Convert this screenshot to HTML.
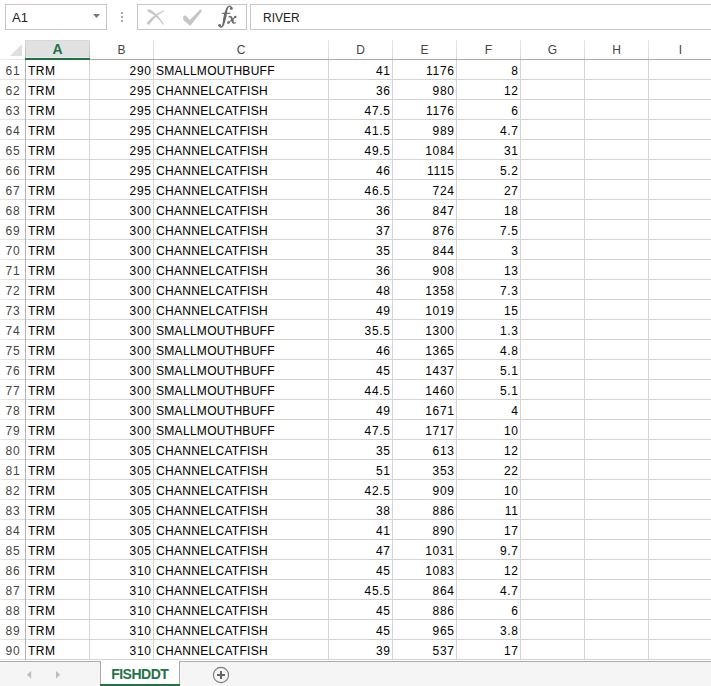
<!DOCTYPE html>
<html><head><meta charset="utf-8"><style>
*{margin:0;padding:0;box-sizing:border-box}
html,body{width:711px;height:686px;overflow:hidden;background:#fff}
body{position:relative;font-family:"Liberation Sans",sans-serif;}
.a{position:absolute}
.t{position:absolute;font-size:12px;line-height:14px;white-space:nowrap;color:#000}
.r{text-align:right}
.t{-webkit-text-stroke:0.05px}
.t.n{letter-spacing:0.7px;-webkit-text-stroke:0px}
.rh{position:absolute;font-size:12px;line-height:14px;white-space:nowrap;color:#444;text-align:right;left:0;width:20.6px;letter-spacing:0.9px}
.hl{position:absolute;height:1px;background:#d4d4d4}
.vl{position:absolute;width:1px;background:#d4d4d4}
.ch{position:absolute;font-size:12px;line-height:14px;color:#444;text-align:center;top:43px}
</style></head><body>
<div class="a" style="left:5px;top:4px;width:102px;height:26px;border:1px solid #c6c6c6"></div>
<div class="t" style="left:12px;top:11px;font-size:13px;color:#222;-webkit-text-stroke:0">A1</div>
<svg class="a" style="left:93px;top:14px" width="8" height="5"><path d="M0 0H7L3.5 4Z" fill="#777"/></svg>
<div class="a" style="left:121px;top:12px;width:2px;height:2px;background:#a6a6a6"></div>
<div class="a" style="left:121px;top:16px;width:2px;height:2px;background:#a6a6a6"></div>
<div class="a" style="left:121px;top:20px;width:2px;height:2px;background:#a6a6a6"></div>
<div class="a" style="left:137px;top:4px;width:110px;height:26px;border:1px solid #c6c6c6"></div>
<svg class="a" style="left:140px;top:4px" width="30" height="26" viewBox="140 4 30 26"><g fill="#c6c6c6"><path d="M148.26 11.90 L148.89 12.17 L149.50 12.45 L150.12 12.75 L150.73 13.07 L151.35 13.42 L151.96 13.79 L152.58 14.19 L153.19 14.61 L153.81 15.05 L154.43 15.51 L155.04 16.00 L155.66 16.51 L156.27 17.05 L156.89 17.61 L157.50 18.19 L158.12 18.79 L158.73 19.42 L159.34 20.08 L159.95 20.75 L160.56 21.45 L161.17 22.17 L161.78 22.92 L162.38 23.69 L162.99 24.49 L163.81 23.91 L163.26 23.06 L162.71 22.23 L162.16 21.43 L161.60 20.64 L161.04 19.87 L160.47 19.12 L159.90 18.40 L159.33 17.70 L158.75 17.01 L158.17 16.35 L157.58 15.71 L156.99 15.09 L156.40 14.49 L155.80 13.91 L155.19 13.35 L154.58 12.82 L153.97 12.30 L153.35 11.81 L152.73 11.33 L152.10 10.88 L151.46 10.45 L150.82 10.04 L150.17 9.66 L149.54 9.30Z"/><circle cx="148.90" cy="10.60" r="1.45"/><circle cx="163.40" cy="24.20" r="0.50"/><path d="M149.66 24.17 L150.12 23.49 L150.59 22.83 L151.06 22.19 L151.55 21.55 L152.05 20.93 L152.56 20.31 L153.09 19.71 L153.62 19.12 L154.17 18.55 L154.73 17.98 L155.30 17.43 L155.88 16.88 L156.47 16.35 L157.08 15.84 L157.69 15.33 L158.32 14.83 L158.96 14.35 L159.62 13.88 L160.28 13.42 L160.96 12.97 L161.65 12.54 L162.35 12.12 L163.07 11.71 L163.80 11.30 L163.40 10.50 L162.63 10.82 L161.86 11.17 L161.10 11.53 L160.35 11.90 L159.60 12.29 L158.87 12.70 L158.15 13.11 L157.43 13.54 L156.73 13.99 L156.03 14.45 L155.35 14.93 L154.67 15.42 L154.01 15.92 L153.35 16.44 L152.70 16.97 L152.07 17.52 L151.44 18.08 L150.82 18.66 L150.22 19.25 L149.62 19.86 L149.03 20.48 L148.46 21.12 L147.89 21.77 L147.34 22.43Z"/><circle cx="148.50" cy="23.30" r="1.45"/><circle cx="163.60" cy="10.90" r="0.45"/></g></svg>
<svg class="a" style="left:180px;top:4px" width="26" height="26" viewBox="180 4 26 26"><path d="M183.2 16.4 L185.4 15.2 L189.7 19.9 L200.4 9.3 L202.0 10.9 L190.5 25.6 L189.6 25.6 L183.1 19.7 Z" fill="#c6c6c6"/></svg>
<svg class="a" style="left:214px;top:4px" width="26" height="26" viewBox="214 4 26 26"><g fill="#6a6a6a"><path d="M232.11 7.60 L232.00 7.29 L231.85 6.98 L231.68 6.69 L231.48 6.44 L231.25 6.21 L231.01 6.02 L230.74 5.86 L230.46 5.74 L230.16 5.66 L229.86 5.61 L229.55 5.61 L229.24 5.64 L228.94 5.70 L228.63 5.81 L228.33 5.94 L228.04 6.11 L227.76 6.31 L227.50 6.54 L227.24 6.80 L227.00 7.09 L226.77 7.41 L226.56 7.76 L226.37 8.14 L226.20 8.52 L227.60 9.08 L227.72 8.74 L227.86 8.45 L228.00 8.18 L228.15 7.94 L228.31 7.73 L228.48 7.54 L228.65 7.38 L228.82 7.24 L228.99 7.12 L229.15 7.03 L229.32 6.96 L229.48 6.91 L229.64 6.89 L229.79 6.88 L229.94 6.89 L230.08 6.91 L230.22 6.96 L230.36 7.03 L230.49 7.11 L230.62 7.23 L230.75 7.37 L230.87 7.54 L230.98 7.74 L231.09 8.00Z"/><circle cx="231.60" cy="7.80" r="0.55"/><circle cx="226.90" cy="8.80" r="0.75"/><path d="M226.19 8.57 L225.93 9.09 L225.68 9.63 L225.44 10.19 L225.21 10.76 L224.98 11.35 L224.77 11.96 L224.56 12.58 L224.37 13.21 L224.18 13.85 L224.01 14.50 L223.85 15.15 L223.70 15.82 L223.57 16.48 L223.44 17.15 L223.33 17.83 L223.22 18.50 L223.12 19.18 L223.03 19.85 L222.95 20.52 L222.87 21.19 L222.80 21.86 L222.72 22.51 L222.65 23.16 L222.57 23.80 L224.23 24.20 L224.45 23.58 L224.67 22.95 L224.88 22.31 L225.09 21.67 L225.29 21.02 L225.48 20.36 L225.66 19.70 L225.84 19.04 L226.01 18.37 L226.16 17.71 L226.31 17.05 L226.45 16.38 L226.57 15.73 L226.69 15.07 L226.80 14.43 L226.91 13.79 L227.00 13.15 L227.10 12.53 L227.18 11.91 L227.27 11.31 L227.35 10.72 L227.44 10.14 L227.52 9.58 L227.61 9.03Z"/><circle cx="226.90" cy="8.80" r="0.70"/><circle cx="223.40" cy="24.00" r="0.80"/><path d="M222.58 23.77 L222.49 24.14 L222.40 24.46 L222.29 24.76 L222.18 25.02 L222.06 25.26 L221.94 25.48 L221.82 25.67 L221.69 25.83 L221.56 25.98 L221.44 26.09 L221.32 26.19 L221.20 26.27 L221.09 26.32 L220.99 26.36 L220.89 26.39 L220.80 26.40 L220.72 26.40 L220.63 26.39 L220.54 26.37 L220.45 26.33 L220.36 26.27 L220.27 26.19 L220.18 26.08 L220.08 25.93 L219.12 26.47 L219.23 26.69 L219.38 26.92 L219.56 27.12 L219.75 27.30 L219.97 27.45 L220.21 27.57 L220.46 27.65 L220.72 27.70 L220.99 27.71 L221.26 27.69 L221.53 27.63 L221.80 27.53 L222.06 27.41 L222.31 27.26 L222.55 27.07 L222.78 26.86 L223.01 26.62 L223.22 26.36 L223.42 26.07 L223.61 25.75 L223.79 25.40 L223.95 25.03 L224.09 24.63 L224.22 24.23Z"/><circle cx="223.40" cy="24.00" r="0.85"/><circle cx="219.60" cy="26.20" r="0.55"/><circle cx="231.3" cy="8.4" r="1.45"/><circle cx="219.6" cy="25.4" r="1.45"/><rect x="221.9" y="12.8" width="8.5" height="1.1"/><path d="M229.34 17.50 L229.56 17.37 L229.74 17.29 L229.89 17.25 L230.00 17.24 L230.09 17.25 L230.15 17.27 L230.19 17.30 L230.23 17.33 L230.26 17.38 L230.31 17.44 L230.36 17.52 L230.42 17.63 L230.49 17.76 L230.56 17.92 L230.63 18.10 L230.70 18.30 L230.77 18.53 L230.84 18.78 L230.91 19.04 L230.97 19.32 L231.04 19.61 L231.10 19.92 L231.17 20.24 L231.24 20.58 L233.36 20.02 L233.26 19.69 L233.14 19.36 L233.03 19.04 L232.92 18.72 L232.80 18.42 L232.67 18.12 L232.55 17.84 L232.41 17.56 L232.27 17.30 L232.12 17.05 L231.96 16.82 L231.78 16.60 L231.58 16.40 L231.37 16.22 L231.13 16.06 L230.86 15.94 L230.58 15.86 L230.29 15.82 L229.99 15.84 L229.71 15.90 L229.43 16.01 L229.16 16.15 L228.90 16.32 L228.66 16.50Z"/><circle cx="229.00" cy="17.00" r="0.60"/><circle cx="232.30" cy="20.30" r="1.10"/><path d="M231.23 20.54 L231.32 20.83 L231.42 21.12 L231.52 21.40 L231.64 21.67 L231.75 21.92 L231.88 22.17 L232.01 22.41 L232.15 22.63 L232.31 22.84 L232.47 23.04 L232.65 23.22 L232.85 23.38 L233.06 23.52 L233.29 23.64 L233.53 23.72 L233.78 23.77 L234.04 23.79 L234.29 23.77 L234.54 23.72 L234.78 23.64 L235.02 23.53 L235.26 23.41 L235.50 23.26 L235.73 23.09 L235.27 22.31 L235.04 22.42 L234.84 22.49 L234.65 22.54 L234.50 22.56 L234.36 22.56 L234.25 22.54 L234.16 22.51 L234.09 22.47 L234.04 22.43 L233.99 22.38 L233.95 22.32 L233.90 22.24 L233.85 22.16 L233.81 22.05 L233.76 21.93 L233.71 21.79 L233.66 21.63 L233.61 21.46 L233.57 21.26 L233.52 21.05 L233.48 20.83 L233.44 20.59 L233.41 20.33 L233.37 20.06Z"/><circle cx="232.30" cy="20.30" r="1.10"/><circle cx="235.50" cy="22.70" r="0.45"/><path d="M228.22 23.45 L228.52 23.24 L228.82 23.02 L229.13 22.80 L229.44 22.57 L229.75 22.34 L230.07 22.10 L230.38 21.86 L230.70 21.61 L231.01 21.36 L231.33 21.10 L231.65 20.84 L231.98 20.57 L232.30 20.30 L232.63 20.03 L232.95 19.74 L233.28 19.46 L233.61 19.17 L233.95 18.87 L234.28 18.57 L234.62 18.27 L234.96 17.96 L235.30 17.64 L235.64 17.32 L235.98 17.00 L235.22 16.20 L234.88 16.52 L234.55 16.84 L234.21 17.15 L233.88 17.45 L233.54 17.76 L233.21 18.05 L232.89 18.34 L232.56 18.63 L232.24 18.91 L231.91 19.19 L231.59 19.46 L231.27 19.73 L230.96 19.99 L230.64 20.25 L230.33 20.50 L230.02 20.75 L229.71 20.99 L229.40 21.23 L229.09 21.46 L228.79 21.69 L228.48 21.91 L228.18 22.13 L227.88 22.34 L227.58 22.55Z"/><circle cx="227.90" cy="23.00" r="0.55"/><circle cx="235.60" cy="16.60" r="0.55"/><circle cx="228.4" cy="22.6" r="1.25"/><circle cx="235.3" cy="16.9" r="1.2"/></g></svg>
<div class="a" style="left:250px;top:4px;width:480px;height:26px;border:1px solid #c6c6c6"></div>
<div class="t" style="left:263px;top:11px;color:#222;-webkit-text-stroke:0">RIVER</div>
<div class="a" style="left:26px;top:40px;width:63px;height:17px;background:#e1e1e1;border-top:1px solid #dadada"></div>
<div class="a" style="left:26px;top:57px;width:63px;height:1px;background:#ece8e9"></div>
<div class="a" style="left:25px;top:58px;width:65px;height:2px;background:#217346"></div>
<div class="hl" style="left:0;top:59px;width:25px;background:linear-gradient(to right,#eeeeee,#dedede)"></div>
<div class="hl" style="left:90px;top:59px;width:630px;background:#ababab"></div>
<svg class="a" style="left:0;top:40px" width="25" height="19"><path d="M10 16H22V4Z" fill="#dfdfdf"/></svg>
<div class="vl" style="left:25px;top:40px;height:18px;background:linear-gradient(#dadada,#b8b8b8)"></div>
<div class="vl" style="left:25px;top:58px;height:602px;background:#b4b4b4"></div>
<div class="vl" style="left:89px;top:40px;height:18px;background:linear-gradient(#dadada,#b8b8b8)"></div>
<div class="vl" style="left:153px;top:40px;height:19px;background:linear-gradient(#e6e6e6,#d8d8d8)"></div>
<div class="vl" style="left:328px;top:40px;height:19px;background:linear-gradient(#e6e6e6,#d8d8d8)"></div>
<div class="vl" style="left:392px;top:40px;height:19px;background:linear-gradient(#e6e6e6,#d8d8d8)"></div>
<div class="vl" style="left:456px;top:40px;height:19px;background:linear-gradient(#e6e6e6,#d8d8d8)"></div>
<div class="vl" style="left:520px;top:40px;height:19px;background:linear-gradient(#e6e6e6,#d8d8d8)"></div>
<div class="vl" style="left:584px;top:40px;height:19px;background:linear-gradient(#e6e6e6,#d8d8d8)"></div>
<div class="vl" style="left:648px;top:40px;height:19px;background:linear-gradient(#e6e6e6,#d8d8d8)"></div>
<div class="a" style="left:25px;top:58px;width:65px;height:2px;background:#217346"></div>
<div class="ch" style="left:26px;width:63px;color:#217346;font-weight:bold;font-size:14px;top:42px">A</div>
<div class="ch" style="left:90px;width:63px">B</div>
<div class="ch" style="left:154px;width:174px">C</div>
<div class="ch" style="left:329px;width:63px">D</div>
<div class="ch" style="left:393px;width:63px">E</div>
<div class="ch" style="left:457px;width:63px">F</div>
<div class="ch" style="left:521px;width:63px">G</div>
<div class="ch" style="left:585px;width:63px">H</div>
<div class="ch" style="left:649px;width:63px">I</div>
<div class="hl" style="left:0;top:79px;width:25px;background:linear-gradient(to right,#ebebeb,#d6d6d6)"></div>
<div class="hl" style="left:26px;top:79px;width:700px"></div>
<div class="hl" style="left:0;top:99px;width:25px;background:linear-gradient(to right,#ebebeb,#d6d6d6)"></div>
<div class="hl" style="left:26px;top:99px;width:700px"></div>
<div class="hl" style="left:0;top:119px;width:25px;background:linear-gradient(to right,#ebebeb,#d6d6d6)"></div>
<div class="hl" style="left:26px;top:119px;width:700px"></div>
<div class="hl" style="left:0;top:139px;width:25px;background:linear-gradient(to right,#ebebeb,#d6d6d6)"></div>
<div class="hl" style="left:26px;top:139px;width:700px"></div>
<div class="hl" style="left:0;top:159px;width:25px;background:linear-gradient(to right,#ebebeb,#d6d6d6)"></div>
<div class="hl" style="left:26px;top:159px;width:700px"></div>
<div class="hl" style="left:0;top:179px;width:25px;background:linear-gradient(to right,#ebebeb,#d6d6d6)"></div>
<div class="hl" style="left:26px;top:179px;width:700px"></div>
<div class="hl" style="left:0;top:199px;width:25px;background:linear-gradient(to right,#ebebeb,#d6d6d6)"></div>
<div class="hl" style="left:26px;top:199px;width:700px"></div>
<div class="hl" style="left:0;top:219px;width:25px;background:linear-gradient(to right,#ebebeb,#d6d6d6)"></div>
<div class="hl" style="left:26px;top:219px;width:700px"></div>
<div class="hl" style="left:0;top:239px;width:25px;background:linear-gradient(to right,#ebebeb,#d6d6d6)"></div>
<div class="hl" style="left:26px;top:239px;width:700px"></div>
<div class="hl" style="left:0;top:259px;width:25px;background:linear-gradient(to right,#ebebeb,#d6d6d6)"></div>
<div class="hl" style="left:26px;top:259px;width:700px"></div>
<div class="hl" style="left:0;top:279px;width:25px;background:linear-gradient(to right,#ebebeb,#d6d6d6)"></div>
<div class="hl" style="left:26px;top:279px;width:700px"></div>
<div class="hl" style="left:0;top:299px;width:25px;background:linear-gradient(to right,#ebebeb,#d6d6d6)"></div>
<div class="hl" style="left:26px;top:299px;width:700px"></div>
<div class="hl" style="left:0;top:319px;width:25px;background:linear-gradient(to right,#ebebeb,#d6d6d6)"></div>
<div class="hl" style="left:26px;top:319px;width:700px"></div>
<div class="hl" style="left:0;top:339px;width:25px;background:linear-gradient(to right,#ebebeb,#d6d6d6)"></div>
<div class="hl" style="left:26px;top:339px;width:700px"></div>
<div class="hl" style="left:0;top:359px;width:25px;background:linear-gradient(to right,#ebebeb,#d6d6d6)"></div>
<div class="hl" style="left:26px;top:359px;width:700px"></div>
<div class="hl" style="left:0;top:379px;width:25px;background:linear-gradient(to right,#ebebeb,#d6d6d6)"></div>
<div class="hl" style="left:26px;top:379px;width:700px"></div>
<div class="hl" style="left:0;top:399px;width:25px;background:linear-gradient(to right,#ebebeb,#d6d6d6)"></div>
<div class="hl" style="left:26px;top:399px;width:700px"></div>
<div class="hl" style="left:0;top:419px;width:25px;background:linear-gradient(to right,#ebebeb,#d6d6d6)"></div>
<div class="hl" style="left:26px;top:419px;width:700px"></div>
<div class="hl" style="left:0;top:439px;width:25px;background:linear-gradient(to right,#ebebeb,#d6d6d6)"></div>
<div class="hl" style="left:26px;top:439px;width:700px"></div>
<div class="hl" style="left:0;top:459px;width:25px;background:linear-gradient(to right,#ebebeb,#d6d6d6)"></div>
<div class="hl" style="left:26px;top:459px;width:700px"></div>
<div class="hl" style="left:0;top:479px;width:25px;background:linear-gradient(to right,#ebebeb,#d6d6d6)"></div>
<div class="hl" style="left:26px;top:479px;width:700px"></div>
<div class="hl" style="left:0;top:499px;width:25px;background:linear-gradient(to right,#ebebeb,#d6d6d6)"></div>
<div class="hl" style="left:26px;top:499px;width:700px"></div>
<div class="hl" style="left:0;top:519px;width:25px;background:linear-gradient(to right,#ebebeb,#d6d6d6)"></div>
<div class="hl" style="left:26px;top:519px;width:700px"></div>
<div class="hl" style="left:0;top:539px;width:25px;background:linear-gradient(to right,#ebebeb,#d6d6d6)"></div>
<div class="hl" style="left:26px;top:539px;width:700px"></div>
<div class="hl" style="left:0;top:559px;width:25px;background:linear-gradient(to right,#ebebeb,#d6d6d6)"></div>
<div class="hl" style="left:26px;top:559px;width:700px"></div>
<div class="hl" style="left:0;top:579px;width:25px;background:linear-gradient(to right,#ebebeb,#d6d6d6)"></div>
<div class="hl" style="left:26px;top:579px;width:700px"></div>
<div class="hl" style="left:0;top:599px;width:25px;background:linear-gradient(to right,#ebebeb,#d6d6d6)"></div>
<div class="hl" style="left:26px;top:599px;width:700px"></div>
<div class="hl" style="left:0;top:619px;width:25px;background:linear-gradient(to right,#ebebeb,#d6d6d6)"></div>
<div class="hl" style="left:26px;top:619px;width:700px"></div>
<div class="hl" style="left:0;top:639px;width:25px;background:linear-gradient(to right,#ebebeb,#d6d6d6)"></div>
<div class="hl" style="left:26px;top:639px;width:700px"></div>
<div class="hl" style="left:0;top:659px;width:25px;background:linear-gradient(to right,#ebebeb,#d6d6d6)"></div>
<div class="hl" style="left:26px;top:659px;width:700px"></div>
<div class="vl" style="left:89px;top:60px;height:600px"></div>
<div class="vl" style="left:153px;top:60px;height:600px"></div>
<div class="vl" style="left:328px;top:60px;height:600px"></div>
<div class="vl" style="left:392px;top:60px;height:600px"></div>
<div class="vl" style="left:456px;top:60px;height:600px"></div>
<div class="vl" style="left:520px;top:60px;height:600px"></div>
<div class="vl" style="left:584px;top:60px;height:600px"></div>
<div class="vl" style="left:648px;top:60px;height:600px"></div>
<div class="rh" style="top:64px">61</div>
<div class="t" style="left:28px;top:64px;letter-spacing:0.5px">TRM</div>
<div class="t r n" style="left:89px;width:62.7px;top:64px">290</div>
<div class="t" style="left:156px;top:64px;letter-spacing:0.3px">SMALLMOUTHBUFF</div>
<div class="t r n" style="left:328px;width:62.7px;top:64px">41</div>
<div class="t r n" style="left:392px;width:62.7px;top:64px">1176</div>
<div class="t r n" style="left:456px;width:62.7px;top:64px">8</div>
<div class="rh" style="top:84px">62</div>
<div class="t" style="left:28px;top:84px;letter-spacing:0.5px">TRM</div>
<div class="t r n" style="left:89px;width:62.7px;top:84px">295</div>
<div class="t" style="left:156px;top:84px;letter-spacing:0.3px">CHANNELCATFISH</div>
<div class="t r n" style="left:328px;width:62.7px;top:84px">36</div>
<div class="t r n" style="left:392px;width:62.7px;top:84px">980</div>
<div class="t r n" style="left:456px;width:62.7px;top:84px">12</div>
<div class="rh" style="top:104px">63</div>
<div class="t" style="left:28px;top:104px;letter-spacing:0.5px">TRM</div>
<div class="t r n" style="left:89px;width:62.7px;top:104px">295</div>
<div class="t" style="left:156px;top:104px;letter-spacing:0.3px">CHANNELCATFISH</div>
<div class="t r n" style="left:328px;width:62.7px;top:104px">47.5</div>
<div class="t r n" style="left:392px;width:62.7px;top:104px">1176</div>
<div class="t r n" style="left:456px;width:62.7px;top:104px">6</div>
<div class="rh" style="top:124px">64</div>
<div class="t" style="left:28px;top:124px;letter-spacing:0.5px">TRM</div>
<div class="t r n" style="left:89px;width:62.7px;top:124px">295</div>
<div class="t" style="left:156px;top:124px;letter-spacing:0.3px">CHANNELCATFISH</div>
<div class="t r n" style="left:328px;width:62.7px;top:124px">41.5</div>
<div class="t r n" style="left:392px;width:62.7px;top:124px">989</div>
<div class="t r n" style="left:456px;width:62.7px;top:124px">4.7</div>
<div class="rh" style="top:144px">65</div>
<div class="t" style="left:28px;top:144px;letter-spacing:0.5px">TRM</div>
<div class="t r n" style="left:89px;width:62.7px;top:144px">295</div>
<div class="t" style="left:156px;top:144px;letter-spacing:0.3px">CHANNELCATFISH</div>
<div class="t r n" style="left:328px;width:62.7px;top:144px">49.5</div>
<div class="t r n" style="left:392px;width:62.7px;top:144px">1084</div>
<div class="t r n" style="left:456px;width:62.7px;top:144px">31</div>
<div class="rh" style="top:164px">66</div>
<div class="t" style="left:28px;top:164px;letter-spacing:0.5px">TRM</div>
<div class="t r n" style="left:89px;width:62.7px;top:164px">295</div>
<div class="t" style="left:156px;top:164px;letter-spacing:0.3px">CHANNELCATFISH</div>
<div class="t r n" style="left:328px;width:62.7px;top:164px">46</div>
<div class="t r n" style="left:392px;width:62.7px;top:164px">1115</div>
<div class="t r n" style="left:456px;width:62.7px;top:164px">5.2</div>
<div class="rh" style="top:184px">67</div>
<div class="t" style="left:28px;top:184px;letter-spacing:0.5px">TRM</div>
<div class="t r n" style="left:89px;width:62.7px;top:184px">295</div>
<div class="t" style="left:156px;top:184px;letter-spacing:0.3px">CHANNELCATFISH</div>
<div class="t r n" style="left:328px;width:62.7px;top:184px">46.5</div>
<div class="t r n" style="left:392px;width:62.7px;top:184px">724</div>
<div class="t r n" style="left:456px;width:62.7px;top:184px">27</div>
<div class="rh" style="top:204px">68</div>
<div class="t" style="left:28px;top:204px;letter-spacing:0.5px">TRM</div>
<div class="t r n" style="left:89px;width:62.7px;top:204px">300</div>
<div class="t" style="left:156px;top:204px;letter-spacing:0.3px">CHANNELCATFISH</div>
<div class="t r n" style="left:328px;width:62.7px;top:204px">36</div>
<div class="t r n" style="left:392px;width:62.7px;top:204px">847</div>
<div class="t r n" style="left:456px;width:62.7px;top:204px">18</div>
<div class="rh" style="top:224px">69</div>
<div class="t" style="left:28px;top:224px;letter-spacing:0.5px">TRM</div>
<div class="t r n" style="left:89px;width:62.7px;top:224px">300</div>
<div class="t" style="left:156px;top:224px;letter-spacing:0.3px">CHANNELCATFISH</div>
<div class="t r n" style="left:328px;width:62.7px;top:224px">37</div>
<div class="t r n" style="left:392px;width:62.7px;top:224px">876</div>
<div class="t r n" style="left:456px;width:62.7px;top:224px">7.5</div>
<div class="rh" style="top:244px">70</div>
<div class="t" style="left:28px;top:244px;letter-spacing:0.5px">TRM</div>
<div class="t r n" style="left:89px;width:62.7px;top:244px">300</div>
<div class="t" style="left:156px;top:244px;letter-spacing:0.3px">CHANNELCATFISH</div>
<div class="t r n" style="left:328px;width:62.7px;top:244px">35</div>
<div class="t r n" style="left:392px;width:62.7px;top:244px">844</div>
<div class="t r n" style="left:456px;width:62.7px;top:244px">3</div>
<div class="rh" style="top:264px">71</div>
<div class="t" style="left:28px;top:264px;letter-spacing:0.5px">TRM</div>
<div class="t r n" style="left:89px;width:62.7px;top:264px">300</div>
<div class="t" style="left:156px;top:264px;letter-spacing:0.3px">CHANNELCATFISH</div>
<div class="t r n" style="left:328px;width:62.7px;top:264px">36</div>
<div class="t r n" style="left:392px;width:62.7px;top:264px">908</div>
<div class="t r n" style="left:456px;width:62.7px;top:264px">13</div>
<div class="rh" style="top:284px">72</div>
<div class="t" style="left:28px;top:284px;letter-spacing:0.5px">TRM</div>
<div class="t r n" style="left:89px;width:62.7px;top:284px">300</div>
<div class="t" style="left:156px;top:284px;letter-spacing:0.3px">CHANNELCATFISH</div>
<div class="t r n" style="left:328px;width:62.7px;top:284px">48</div>
<div class="t r n" style="left:392px;width:62.7px;top:284px">1358</div>
<div class="t r n" style="left:456px;width:62.7px;top:284px">7.3</div>
<div class="rh" style="top:304px">73</div>
<div class="t" style="left:28px;top:304px;letter-spacing:0.5px">TRM</div>
<div class="t r n" style="left:89px;width:62.7px;top:304px">300</div>
<div class="t" style="left:156px;top:304px;letter-spacing:0.3px">CHANNELCATFISH</div>
<div class="t r n" style="left:328px;width:62.7px;top:304px">49</div>
<div class="t r n" style="left:392px;width:62.7px;top:304px">1019</div>
<div class="t r n" style="left:456px;width:62.7px;top:304px">15</div>
<div class="rh" style="top:324px">74</div>
<div class="t" style="left:28px;top:324px;letter-spacing:0.5px">TRM</div>
<div class="t r n" style="left:89px;width:62.7px;top:324px">300</div>
<div class="t" style="left:156px;top:324px;letter-spacing:0.3px">SMALLMOUTHBUFF</div>
<div class="t r n" style="left:328px;width:62.7px;top:324px">35.5</div>
<div class="t r n" style="left:392px;width:62.7px;top:324px">1300</div>
<div class="t r n" style="left:456px;width:62.7px;top:324px">1.3</div>
<div class="rh" style="top:344px">75</div>
<div class="t" style="left:28px;top:344px;letter-spacing:0.5px">TRM</div>
<div class="t r n" style="left:89px;width:62.7px;top:344px">300</div>
<div class="t" style="left:156px;top:344px;letter-spacing:0.3px">SMALLMOUTHBUFF</div>
<div class="t r n" style="left:328px;width:62.7px;top:344px">46</div>
<div class="t r n" style="left:392px;width:62.7px;top:344px">1365</div>
<div class="t r n" style="left:456px;width:62.7px;top:344px">4.8</div>
<div class="rh" style="top:364px">76</div>
<div class="t" style="left:28px;top:364px;letter-spacing:0.5px">TRM</div>
<div class="t r n" style="left:89px;width:62.7px;top:364px">300</div>
<div class="t" style="left:156px;top:364px;letter-spacing:0.3px">SMALLMOUTHBUFF</div>
<div class="t r n" style="left:328px;width:62.7px;top:364px">45</div>
<div class="t r n" style="left:392px;width:62.7px;top:364px">1437</div>
<div class="t r n" style="left:456px;width:62.7px;top:364px">5.1</div>
<div class="rh" style="top:384px">77</div>
<div class="t" style="left:28px;top:384px;letter-spacing:0.5px">TRM</div>
<div class="t r n" style="left:89px;width:62.7px;top:384px">300</div>
<div class="t" style="left:156px;top:384px;letter-spacing:0.3px">SMALLMOUTHBUFF</div>
<div class="t r n" style="left:328px;width:62.7px;top:384px">44.5</div>
<div class="t r n" style="left:392px;width:62.7px;top:384px">1460</div>
<div class="t r n" style="left:456px;width:62.7px;top:384px">5.1</div>
<div class="rh" style="top:404px">78</div>
<div class="t" style="left:28px;top:404px;letter-spacing:0.5px">TRM</div>
<div class="t r n" style="left:89px;width:62.7px;top:404px">300</div>
<div class="t" style="left:156px;top:404px;letter-spacing:0.3px">SMALLMOUTHBUFF</div>
<div class="t r n" style="left:328px;width:62.7px;top:404px">49</div>
<div class="t r n" style="left:392px;width:62.7px;top:404px">1671</div>
<div class="t r n" style="left:456px;width:62.7px;top:404px">4</div>
<div class="rh" style="top:424px">79</div>
<div class="t" style="left:28px;top:424px;letter-spacing:0.5px">TRM</div>
<div class="t r n" style="left:89px;width:62.7px;top:424px">300</div>
<div class="t" style="left:156px;top:424px;letter-spacing:0.3px">SMALLMOUTHBUFF</div>
<div class="t r n" style="left:328px;width:62.7px;top:424px">47.5</div>
<div class="t r n" style="left:392px;width:62.7px;top:424px">1717</div>
<div class="t r n" style="left:456px;width:62.7px;top:424px">10</div>
<div class="rh" style="top:444px">80</div>
<div class="t" style="left:28px;top:444px;letter-spacing:0.5px">TRM</div>
<div class="t r n" style="left:89px;width:62.7px;top:444px">305</div>
<div class="t" style="left:156px;top:444px;letter-spacing:0.3px">CHANNELCATFISH</div>
<div class="t r n" style="left:328px;width:62.7px;top:444px">35</div>
<div class="t r n" style="left:392px;width:62.7px;top:444px">613</div>
<div class="t r n" style="left:456px;width:62.7px;top:444px">12</div>
<div class="rh" style="top:464px">81</div>
<div class="t" style="left:28px;top:464px;letter-spacing:0.5px">TRM</div>
<div class="t r n" style="left:89px;width:62.7px;top:464px">305</div>
<div class="t" style="left:156px;top:464px;letter-spacing:0.3px">CHANNELCATFISH</div>
<div class="t r n" style="left:328px;width:62.7px;top:464px">51</div>
<div class="t r n" style="left:392px;width:62.7px;top:464px">353</div>
<div class="t r n" style="left:456px;width:62.7px;top:464px">22</div>
<div class="rh" style="top:484px">82</div>
<div class="t" style="left:28px;top:484px;letter-spacing:0.5px">TRM</div>
<div class="t r n" style="left:89px;width:62.7px;top:484px">305</div>
<div class="t" style="left:156px;top:484px;letter-spacing:0.3px">CHANNELCATFISH</div>
<div class="t r n" style="left:328px;width:62.7px;top:484px">42.5</div>
<div class="t r n" style="left:392px;width:62.7px;top:484px">909</div>
<div class="t r n" style="left:456px;width:62.7px;top:484px">10</div>
<div class="rh" style="top:504px">83</div>
<div class="t" style="left:28px;top:504px;letter-spacing:0.5px">TRM</div>
<div class="t r n" style="left:89px;width:62.7px;top:504px">305</div>
<div class="t" style="left:156px;top:504px;letter-spacing:0.3px">CHANNELCATFISH</div>
<div class="t r n" style="left:328px;width:62.7px;top:504px">38</div>
<div class="t r n" style="left:392px;width:62.7px;top:504px">886</div>
<div class="t r n" style="left:456px;width:62.7px;top:504px">11</div>
<div class="rh" style="top:524px">84</div>
<div class="t" style="left:28px;top:524px;letter-spacing:0.5px">TRM</div>
<div class="t r n" style="left:89px;width:62.7px;top:524px">305</div>
<div class="t" style="left:156px;top:524px;letter-spacing:0.3px">CHANNELCATFISH</div>
<div class="t r n" style="left:328px;width:62.7px;top:524px">41</div>
<div class="t r n" style="left:392px;width:62.7px;top:524px">890</div>
<div class="t r n" style="left:456px;width:62.7px;top:524px">17</div>
<div class="rh" style="top:544px">85</div>
<div class="t" style="left:28px;top:544px;letter-spacing:0.5px">TRM</div>
<div class="t r n" style="left:89px;width:62.7px;top:544px">305</div>
<div class="t" style="left:156px;top:544px;letter-spacing:0.3px">CHANNELCATFISH</div>
<div class="t r n" style="left:328px;width:62.7px;top:544px">47</div>
<div class="t r n" style="left:392px;width:62.7px;top:544px">1031</div>
<div class="t r n" style="left:456px;width:62.7px;top:544px">9.7</div>
<div class="rh" style="top:564px">86</div>
<div class="t" style="left:28px;top:564px;letter-spacing:0.5px">TRM</div>
<div class="t r n" style="left:89px;width:62.7px;top:564px">310</div>
<div class="t" style="left:156px;top:564px;letter-spacing:0.3px">CHANNELCATFISH</div>
<div class="t r n" style="left:328px;width:62.7px;top:564px">45</div>
<div class="t r n" style="left:392px;width:62.7px;top:564px">1083</div>
<div class="t r n" style="left:456px;width:62.7px;top:564px">12</div>
<div class="rh" style="top:584px">87</div>
<div class="t" style="left:28px;top:584px;letter-spacing:0.5px">TRM</div>
<div class="t r n" style="left:89px;width:62.7px;top:584px">310</div>
<div class="t" style="left:156px;top:584px;letter-spacing:0.3px">CHANNELCATFISH</div>
<div class="t r n" style="left:328px;width:62.7px;top:584px">45.5</div>
<div class="t r n" style="left:392px;width:62.7px;top:584px">864</div>
<div class="t r n" style="left:456px;width:62.7px;top:584px">4.7</div>
<div class="rh" style="top:604px">88</div>
<div class="t" style="left:28px;top:604px;letter-spacing:0.5px">TRM</div>
<div class="t r n" style="left:89px;width:62.7px;top:604px">310</div>
<div class="t" style="left:156px;top:604px;letter-spacing:0.3px">CHANNELCATFISH</div>
<div class="t r n" style="left:328px;width:62.7px;top:604px">45</div>
<div class="t r n" style="left:392px;width:62.7px;top:604px">886</div>
<div class="t r n" style="left:456px;width:62.7px;top:604px">6</div>
<div class="rh" style="top:624px">89</div>
<div class="t" style="left:28px;top:624px;letter-spacing:0.5px">TRM</div>
<div class="t r n" style="left:89px;width:62.7px;top:624px">310</div>
<div class="t" style="left:156px;top:624px;letter-spacing:0.3px">CHANNELCATFISH</div>
<div class="t r n" style="left:328px;width:62.7px;top:624px">45</div>
<div class="t r n" style="left:392px;width:62.7px;top:624px">965</div>
<div class="t r n" style="left:456px;width:62.7px;top:624px">3.8</div>
<div class="rh" style="top:644px">90</div>
<div class="t" style="left:28px;top:644px;letter-spacing:0.5px">TRM</div>
<div class="t r n" style="left:89px;width:62.7px;top:644px">310</div>
<div class="t" style="left:156px;top:644px;letter-spacing:0.3px">CHANNELCATFISH</div>
<div class="t r n" style="left:328px;width:62.7px;top:644px">39</div>
<div class="t r n" style="left:392px;width:62.7px;top:644px">537</div>
<div class="t r n" style="left:456px;width:62.7px;top:644px">17</div>
<div class="a" style="left:0;top:661px;width:711px;height:25px;background:#f5f5f5;border-top:1px solid #ababab"></div>
<div class="a" style="left:100px;top:661px;width:80px;height:25px;background:#fff;border-left:1px solid #ababab;border-right:1px solid #ababab"></div>
<div class="a" style="left:100px;top:684px;width:80px;height:2px;background:#217346"></div>
<div class="a" style="left:101px;top:666px;width:78px;text-align:center;font-size:14px;font-weight:bold;color:#217346;line-height:16px;letter-spacing:-0.5px;text-indent:-0.5px">FISHDDT</div>
<svg class="a" style="left:27px;top:671px" width="5" height="8"><path d="M4.2 0V7.4L0 3.7Z" fill="#bdbdbd"/></svg>
<svg class="a" style="left:56px;top:671px" width="5" height="8"><path d="M0 0V7.4L4.2 3.7Z" fill="#bdbdbd"/></svg>
<svg class="a" style="left:211px;top:665px" width="20" height="20" viewBox="211 665 20 20"><circle cx="221" cy="675" r="7.6" stroke="#7a7a7a" stroke-width="1.1" fill="none"/><path d="M221 671V679M217 675H225" stroke="#666" stroke-width="2"/></svg>
</body></html>
